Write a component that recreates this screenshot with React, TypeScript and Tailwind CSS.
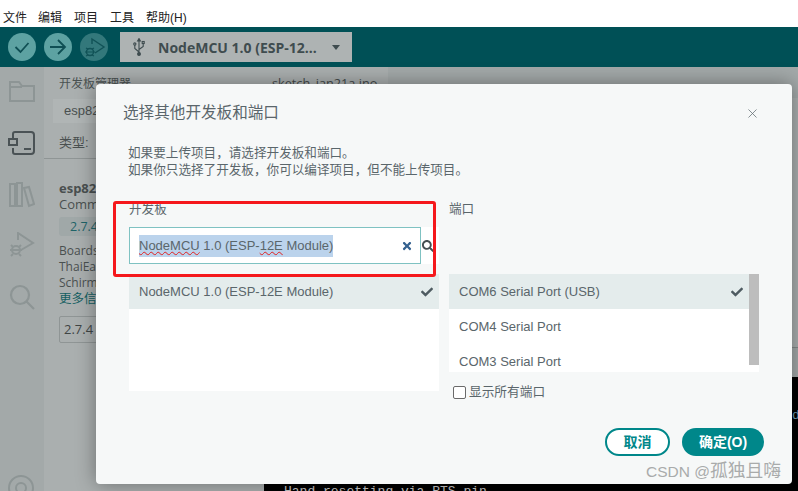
import React from "react";
import { FaCheck, FaSearch, FaTimes } from "react-icons/fa";
import { X } from "lucide-react";

const CJK = "font-['Liberation_Sans','Noto_Sans_CJK_SC',sans-serif]";

function Sidebar() {
  const c = "#8d9595";
  return (
    <div className="w-[44px] h-full bg-[#a3a9a9] flex flex-col items-center gap-[4px] relative shrink-0">
      <div className="h-[48px] flex items-center justify-center">
        <svg width="28" height="24" viewBox="0 0 28 24" fill="none" stroke={c} strokeWidth="2">
          <path d="M2 22V3h9l3 4h12v15z" />
          <path d="M2 8h12" />
        </svg>
      </div>
      <div className="h-[48px] flex items-center justify-center">
        <svg width="28" height="24" viewBox="0 0 28 24" fill="none" stroke="#4a5255" strokeWidth="2">
          <path d="M5 7V3a2 2 0 0 1 2-2h16a3 3 0 0 1 3 3v16a3 3 0 0 1-3 3H7a2 2 0 0 1-2-2v-4" />
          <rect x="1" y="8" width="8" height="6" />
          <path d="M16 18h7" />
        </svg>
      </div>
      <div className="h-[48px] flex items-center justify-center">
        <svg width="26" height="26" viewBox="0 0 26 26" fill="none" stroke={c} strokeWidth="2">
          <rect x="1" y="2" width="5" height="22" />
          <rect x="8" y="1" width="5" height="23" />
          <path d="M15 6l5-1 5 17-5 2z" />
        </svg>
      </div>
      <div className="h-[48px] flex items-center justify-center -mt-[2px]">
        <svg width="26" height="26" viewBox="0 0 26 26" fill="none" stroke={c} strokeWidth="2">
          <path d="M9 8V1l15 10-12 7" />
          <circle cx="7" cy="18" r="4" />
          <path d="M1 18h12M2 13l2 2M12 13l-2 2M2 24l2-2M12 24l-2-2" />
        </svg>
      </div>
      <div className="h-[48px] flex items-center justify-center">
        <svg width="26" height="26" viewBox="0 0 26 26" fill="none" stroke={c} strokeWidth="2.2">
          <circle cx="11" cy="11" r="9" />
          <path d="M17.5 17.5L25 25" />
        </svg>
      </div>
      <div className="absolute left-[8px] top-[408px] w-[26px] h-[26px] rounded-full border-2 border-[#8d9595] flex items-center justify-center">
        <div className="w-[12px] h-[12px] rounded-full border-2 border-[#8d9595]" />
      </div>
    </div>
  );
}

function BoardsPanel() {
  return (
    <div className={`w-[220px] h-full bg-[#aaafaf] shrink-0 overflow-hidden text-[#4a5050] ${CJK}`}>
      <div className="pl-[15px] pt-[10px] text-[12px] leading-[14px] text-[#4a5252]">开发板管理器</div>
      <div className="ml-[9px] mt-[8px] w-[200px] h-[24px] bg-[#b0b5b5] pl-[11px] text-[13px] leading-[24px]">esp8266</div>
      <div className="pl-[15px] mt-[12px] text-[13px] leading-[16px]">类型:</div>
      <div className="mt-[7px] h-px bg-[#8f9595]" />
      <div className="pl-[15px] mt-[21px] text-[13px] leading-[16px] font-bold font-['Open_Sans',sans-serif]">esp8266</div>
      <div className="pl-[15px] text-[13px] leading-[16px] font-['Open_Sans',sans-serif]">Community</div>
      <div className="ml-[15px] mt-[5px] w-[60px] h-[19px] rounded-[3px] bg-[#a0a8a8] pl-[11px] text-[12.5px] leading-[19px] text-[#1f6468] font-['Open_Sans',sans-serif]">2.7.4</div>
      <div className="pl-[15px] mt-[7px] text-[12px] leading-[16px] font-['Open_Sans',sans-serif] whitespace-nowrap">
        <div>Boards included</div>
        <div>ThaiEasyElec</div>
        <div>Schirmer</div>
      </div>
      <div className="pl-[15px] text-[12.5px] leading-[16px] text-[#155f62]">更多信息</div>
      <div className="ml-[15px] mt-[9px] w-[80px] h-[27px] rounded-[2px] border border-[#8f9595] pl-[4px] text-[13px] leading-[25px] text-[#3f4545] font-['Open_Sans',sans-serif]">2.7.4</div>
    </div>
  );
}

function EditorArea() {
  return (
    <div className="flex-1 min-w-0 h-full flex flex-col bg-[#a3a9a9]">
      <div className="h-[31px] shrink-0 flex bg-[#a3a9a9]">
        <div className="w-[124px] bg-[#aaafaf] pl-[8px] pt-[7px] text-[12.7px] leading-[18px] text-[#444a4a] font-['Open_Sans',sans-serif] whitespace-nowrap">sketch_jan21a.ino</div>
      </div>
      <div className="h-[249px] shrink-0 bg-[#aaafaf]" />
      <div className="h-px shrink-0 bg-[#858a8a]" />
      <div className="h-[29px] shrink-0 bg-[#a3a9a9]" />
      <div className="flex-1 bg-black relative overflow-hidden font-['Liberation_Mono',monospace] text-[13px] text-[#c8c8c8] pl-[20px] pt-[105px] whitespace-nowrap">
        Hand resetting via RTS pin
        <div className="absolute left-[528px] top-[31px] text-[#6f9bb5] leading-[16px]">d</div>
      </div>
    </div>
  );
}

function Row({ label, selected }: { label: string; selected?: boolean }) {
  return (
    <div className={`h-[35px] shrink-0 flex items-center justify-between pl-[10px] pr-[6px] pt-[1px] text-[13px] text-[#5a666b] ${selected ? "bg-[#e4ecec]" : ""}`}>
      <span>{label}</span>
      {selected && <FaCheck className="text-[#4e5b61] text-[12px]" />}
    </div>
  );
}

function Dialog() {
  return (
    <div className={`absolute left-[96px] top-[84px] w-[696px] h-[400px] rounded-[4px] bg-[#f6f8f8] shadow-[0_0_20px_rgba(0,0,0,0.38)] flex flex-col text-[#5a666b] ${CJK}`}>
      <div className="flex items-center justify-between pl-[27px] pr-[32px] pt-[18px] h-[40px] shrink-0">
        <div className="text-[15.6px] leading-[22px]">选择其他开发板和端口</div>
        <X size={15} strokeWidth={1.2} className="text-[#5f6b70]" />
      </div>
      <div className="pl-[32px] mt-[21px] text-[12.6px] leading-[17px] shrink-0">
        <div>如果要上传项目{"\uFF0C"}请选择开发板和端口。</div>
        <div>如果你只选择了开发板{"\uFF0C"}你可以编译项目{"\uFF0C"}但不能上传项目。</div>
      </div>
      <div className="flex gap-[10px] pl-[33px] mt-[21px] shrink-0">
        <div className="w-[310px]">
          <div className="h-[20px] text-[12.6px] leading-[19px]">开发板</div>
          <div className="mt-[7px] h-[37px] flex bg-white">
            <div className="w-[292px] h-full border border-[#7fc2c2] flex items-center justify-between pl-[9px] pr-[7px]">
              <span className="bg-[#bbd3ec] text-[13px] leading-[22px] whitespace-nowrap">
                <span className="underline decoration-wavy decoration-[#e02020] decoration-1">NodeMCU</span> 1.0 (ESP-<span className="underline decoration-wavy decoration-[#e02020] decoration-1">12E</span> Module)
              </span>
              <FaTimes className="text-[#34618f] text-[12px]" />
            </div>
            <div className="flex-1 flex items-center pl-[1px]">
              <FaSearch className="text-[#454f52] text-[12px]" />
            </div>
          </div>
          <div className="mt-[10px] h-[117px] bg-white">
            <Row label="NodeMCU 1.0 (ESP-12E Module)" selected />
          </div>
        </div>
        <div className="w-[310px]">
          <div className="h-[20px] text-[12.6px] leading-[19px]">端口</div>
          <div className="mt-[54px] h-[98px] bg-white overflow-hidden flex">
            <div className="w-[300px] shrink-0 flex flex-col">
              <Row label="COM6 Serial Port (USB)" selected />
              <Row label="COM4 Serial Port" />
              <Row label="COM3 Serial Port" />
            </div>
            <div className="w-[10px] h-[91px] bg-[#bdbdbd]" />
          </div>
          <div className="mt-[14px] h-[14px] flex items-center pl-[4px] gap-[3px] text-[12.7px]">
            <span className="w-[13px] h-[13px] rounded-[2px] border border-[#6a6a6a] bg-white shrink-0 -mt-[1px]" />
            <span className="whitespace-nowrap">显示所有端口</span>
          </div>
        </div>
      </div>
      <div className="mt-auto mb-[28px] pr-[28px] flex justify-end gap-[12px] shrink-0">
        <button className="w-[65px] h-[28px] rounded-full border-2 border-[#00878a] bg-white text-[#00878a] text-[14px] font-bold">取消</button>
        <button className="w-[82px] h-[28px] rounded-full bg-[#00878a] text-white text-[14px] font-bold">确定(O)</button>
      </div>
      <div className="absolute left-[17px] top-[117px] w-[323px] h-[76px] rounded-[3px] border-[3px] border-[#f5181c]" />
      <div className="absolute left-[550px] top-[377px] text-[15.5px] leading-[20px] text-[#a9abab] whitespace-nowrap">
        CSDN @<span className="text-[17.75px]">孤独且嗨</span>
      </div>
    </div>
  );
}

export default function App() {
  return (
    <div className={`relative w-[798px] h-[491px] overflow-hidden bg-white ${CJK}`}>
      <div className="h-[27px] flex items-center text-[12px] text-[#222] pt-[8px] pl-[3px]">
        <span className="w-[35px]">文件</span>
        <span className="w-[36px]">编辑</span>
        <span className="w-[36px]">项目</span>
        <span className="w-[36px]">工具</span>
        <span>帮助(H)</span>
      </div>
      <div className="h-[40px] bg-[#005056] flex items-center pl-[8px]">
        <svg width="28" height="28" viewBox="0 0 28 28" fill="none" className="mr-[8px]">
          <circle cx="14" cy="14" r="14" fill="#5da2a2" />
          <path d="M7.5 14l5 5 8-9" stroke="#0f4f54" strokeWidth="1.8" />
        </svg>
        <svg width="28" height="28" viewBox="0 0 28 28" fill="none" className="mr-[8px]">
          <circle cx="14" cy="14" r="14" fill="#5da2a2" />
          <path d="M6 14h15M14 7l7 7-7 7" stroke="#0f4f54" strokeWidth="1.8" />
        </svg>
        <svg width="28" height="28" viewBox="0 0 28 28" fill="none" className="mr-[12px]">
          <circle cx="14" cy="14" r="14" fill="#33787b" />
          <path d="M12 11V6l12 8-9 6" stroke="#115257" strokeWidth="1.4" />
          <circle cx="10" cy="19" r="3.5" stroke="#115257" strokeWidth="1.4" />
          <path d="M5 19h10M6 15l2 1M14 15l-2 1M6 23l2-1M14 23l-2-1" stroke="#115257" strokeWidth="1.2" />
        </svg>
        <div className="w-[232px] h-[30px] bg-[#aeb3b3] flex items-center pl-[13px] font-['Open_Sans',sans-serif] font-bold text-[14px] text-[#3f4c4f] whitespace-nowrap">
          <svg width="12" height="18" viewBox="0 0 12 18" fill="none" stroke="#3f4c4f" strokeWidth="1.1" className="mr-[13px]">
            <path d="M6 17V2M6 0.5L4.6 3h2.8zM6 14L1.8 10.5V7M6 11.5l4.2-3V5.5" />
            <circle cx="1.8" cy="6" r="1.1" />
            <rect x="9.2" y="3.5" width="2" height="2" />
            <circle cx="6" cy="16" r="1.4" fill="#3f4c4f" />
          </svg>
          <span className="w-[174px]">NodeMCU 1.0 (ESP-12...</span>
          <svg width="8" height="5" viewBox="0 0 8 5" fill="#3f4c4f"><path d="M0 0h8L4 5z" /></svg>
        </div>
      </div>
      <div className="h-[424px] flex">
        <Sidebar />
        <BoardsPanel />
        <EditorArea />
      </div>
      <Dialog />
    </div>
  );
}
